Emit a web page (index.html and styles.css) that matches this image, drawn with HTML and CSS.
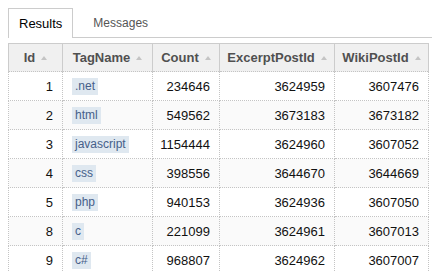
FILE: index.html
```html
<!DOCTYPE html>
<html lang="en">
<head>
    <meta charset="UTF-8">
    <title>Query Results</title>
    <link rel="stylesheet" href="styles.css">
</head>
<body>
    <div class="tab-bar">
        <div class="tab tab-active">Results</div>
        <div class="tab">Messages</div>
    </div>

    <table class="results">
        <colgroup>
            <col class="col-id">
            <col class="col-tag">
            <col class="col-count">
            <col class="col-excerpt">
            <col class="col-wiki">
        </colgroup>
        <thead>
            <tr>
                <th>Id<span class="sort"></span></th>
                <th>TagName<span class="sort"></span></th>
                <th>Count<span class="sort"></span></th>
                <th>ExcerptPostId<span class="sort"></span></th>
                <th>WikiPostId<span class="sort"></span></th>
            </tr>
        </thead>
        <tbody>
            <tr><td>1</td><td class="tag-cell"><span class="tag">.net</span></td><td>234646</td><td>3624959</td><td>3607476</td></tr>
            <tr><td>2</td><td class="tag-cell"><span class="tag">html</span></td><td>549562</td><td>3673183</td><td>3673182</td></tr>
            <tr><td>3</td><td class="tag-cell"><span class="tag">javascript</span></td><td>1154444</td><td>3624960</td><td>3607052</td></tr>
            <tr><td>4</td><td class="tag-cell"><span class="tag">css</span></td><td>398556</td><td>3644670</td><td>3644669</td></tr>
            <tr><td>5</td><td class="tag-cell"><span class="tag">php</span></td><td>940153</td><td>3624936</td><td>3607050</td></tr>
            <tr><td>8</td><td class="tag-cell"><span class="tag">c</span></td><td>221099</td><td>3624961</td><td>3607013</td></tr>
            <tr><td>9</td><td class="tag-cell"><span class="tag">c#</span></td><td>968807</td><td>3624962</td><td>3607007</td></tr>
        </tbody>
    </table>
</body>
</html>
```

FILE: styles.css
```css
body {
    margin: 8px 0 0 8px;
    background-color: #fff;
    font-family: 'Liberation Sans', Arial, sans-serif;
    color: #000;
    overflow: hidden;
    height: 264px;
}

/* Tabs */
.tab-bar {
    display: flex;
    align-items: flex-end;
    border-bottom: 1px solid #ccc;
    height: 29px;
}

.tab {
    height: 28px;
    line-height: 28px;
    padding: 0 10px;
    font-size: 12px;
    color: #555;
    margin-left: 10px;
}

.tab-active {
    margin-left: 0;
    height: 29px;
    line-height: 30px;
    margin-bottom: -1px;
    border: 1px solid #ccc;
    border-bottom: none;
    background-color: #fff;
    font-size: 13px;
    color: #000;
}

/* Results grid */
.results {
    margin-top: 5px;
    border-collapse: collapse;
    table-layout: fixed;
    width: 421px;
    font-size: 13px;
}

.col-id { width: 54px; }
.col-tag { width: 90px; }
.col-count { width: 67px; }
.col-excerpt { width: 115px; }
.col-wiki { width: 94px; }

.results th {
    height: 27px;
    padding: 0;
    background-color: #f0f0f0;
    border: 1px solid #ccc;
    border-bottom: 1px dotted #c4c4c4;
    color: #505050;
    font-weight: bold;
    text-align: center;
    white-space: nowrap;
}

.sort {
    display: inline-block;
    margin-left: 6px;
    border-left: 3.5px solid transparent;
    border-right: 3.5px solid transparent;
    border-bottom: 4px solid #c4c4c4;
    vertical-align: 2px;
}

.results td {
    height: 28px;
    padding: 0 9px 0 0;
    border: 1px dotted #c4c4c4;
    text-align: right;
    color: #111;
}

.results tbody tr:nth-child(even) td {
    background-color: #fafafa;
}

.results td.tag-cell {
    text-align: left;
    padding: 0 0 0 9px;
}

.tag {
    display: inline-block;
    padding: 2px 3px;
    line-height: 13px;
    font-size: 12px;
    background-color: #dfe8f0;
    color: #46608a;
}
```
